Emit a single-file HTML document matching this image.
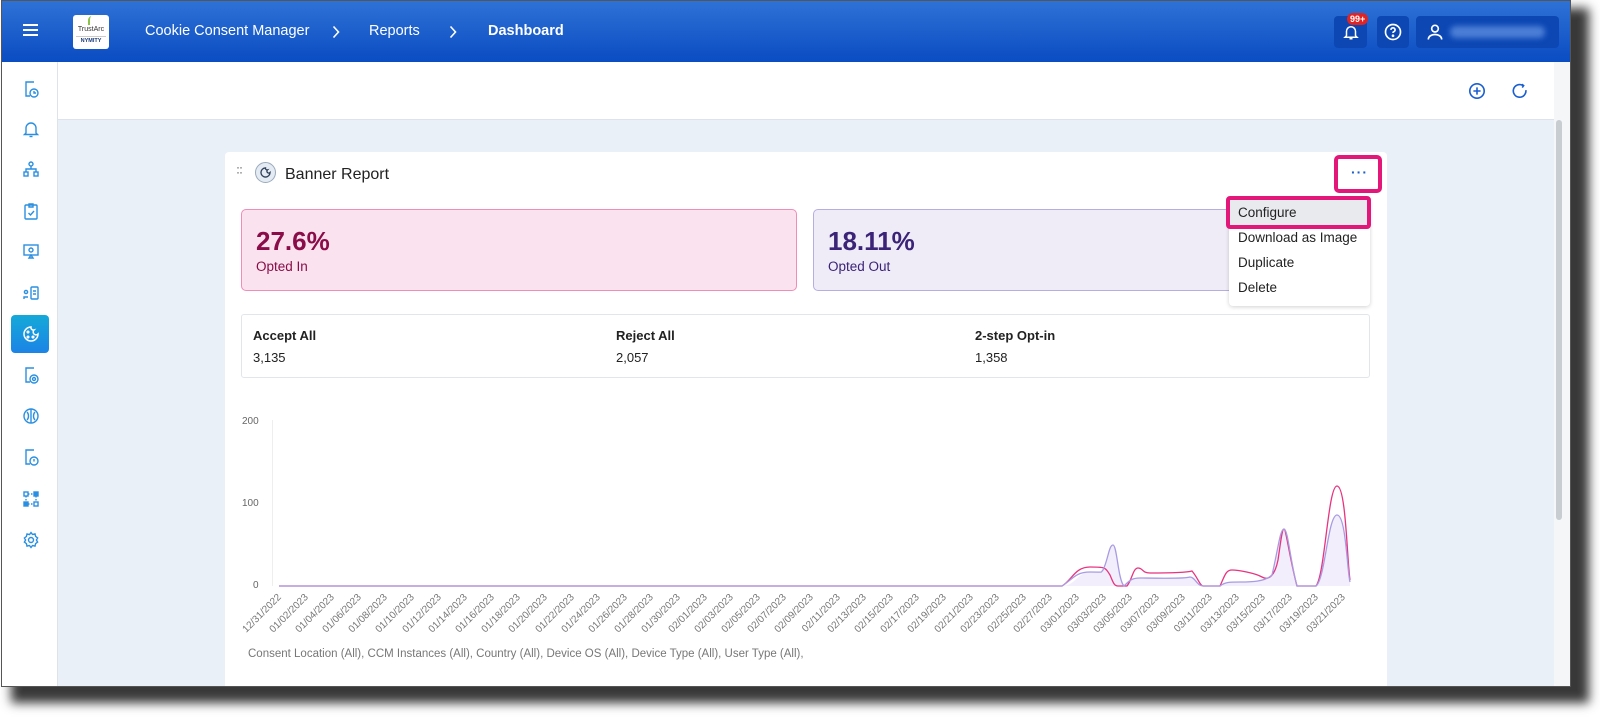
<!DOCTYPE html>
<html><head><meta charset="utf-8"><style>
*{box-sizing:border-box;margin:0;padding:0}
body{width:1600px;height:717px;background:#fff;position:relative;overflow:hidden;font-family:"Liberation Sans",sans-serif;color:#222}
.win{position:absolute;left:1px;top:0;width:1570px;height:687px;border:1px solid #555;background:#eaf0f8;box-shadow:14px 12px 10px 4px rgba(0,0,0,.78);overflow:hidden}
.hdr{position:absolute;left:0;top:0;width:1570px;height:61px;background:linear-gradient(#2f72d6,#0a4cc2)}
.a{position:absolute}
.bc{position:absolute;top:22px;color:#fff;font-size:14.5px}
.hb{position:absolute;top:15px;height:32px;background:#0c47b4;border-radius:4px}
.side{position:absolute;left:0;top:61px;width:56px;height:626px;background:#fff;border-right:1px solid #dde3ea}
.ic{position:absolute;left:19px;width:20px;height:20px}
.tool{position:absolute;left:56px;top:61px;width:1496px;height:58px;background:#fff;border-bottom:1px solid #dce3ec}
.card{position:absolute;left:223px;top:151px;width:1162px;height:560px;background:#fff;border-radius:4px}
.mi{position:absolute;left:1238px;font-size:13.5px;color:#222}
.xl{position:absolute;font-size:10px;color:#777;transform-origin:100% 0;transform:rotate(-45deg);white-space:nowrap;text-align:right}
</style></head><body>
<div class="win">
<div class="hdr">
 <div class="a" style="left:21px;top:23px;width:15px;height:2px;background:#fff;box-shadow:0 5px 0 #fff,0 10px 0 #fff"></div>
 <div class="a" style="left:71px;top:14px;width:36px;height:34px;background:#fff;border-radius:3px;text-align:center;font-size:7px;color:#333;line-height:8px;padding-top:11px">TrustArc<div style="border-top:1px solid #ccc;margin:2px 3px 0;font-size:5.5px;font-weight:bold;color:#1a3a7a">NYMITY</div></div>
 <div class="a" style="left:86px;top:15px;width:7px;height:9px;border-left:2px solid #8bc34a;border-radius:50% 0 0 0"></div>
 <div class="bc" style="left:143px">Cookie Consent Manager</div>
 <svg class="a" style="left:330px;top:24px" width="8" height="14" viewBox="0 0 8 14" fill="none" stroke="#fff" stroke-width="1.6"><path d="M1.5 1.5l5 5.5-5 5.5"/></svg>
 <div class="bc" style="left:367px">Reports</div>
 <svg class="a" style="left:447px;top:24px" width="8" height="14" viewBox="0 0 8 14" fill="none" stroke="#fff" stroke-width="1.6"><path d="M1.5 1.5l5 5.5-5 5.5"/></svg>
 <div class="bc" style="left:486px;font-weight:bold">Dashboard</div>
 <div class="hb" style="left:1332px;width:33px">
  <svg class="a" style="left:8px;top:7px" width="18" height="18" viewBox="0 0 24 24" fill="none" stroke="#fff" stroke-width="2"><path d="M6 17V11a6 6 0 0 1 12 0v6l2 2H4z"/><path d="M10 21h4"/></svg>
  <div class="a" style="left:13px;top:-3px;background:#e02424;color:#fff;font-size:9px;font-weight:bold;border-radius:7px;padding:1px 3px">99+</div></div>
 <div class="hb" style="left:1375px;width:32px"><svg class="a" style="left:6px;top:6px" width="20" height="20" viewBox="0 0 24 24" fill="none" stroke="#fff" stroke-width="2"><circle cx="12" cy="12" r="9"/><path d="M9.5 9.5a2.5 2.5 0 1 1 3 2.4c-.5.2-.5.6-.5 1.3"/><circle cx="12" cy="16.5" r=".6" fill="#fff"/></svg></div>
 <div class="hb" style="left:1414px;width:143px"><svg class="a" style="left:9px;top:6px" width="20" height="20" viewBox="0 0 24 24" fill="none" stroke="#fff" stroke-width="2"><circle cx="12" cy="8" r="4"/><path d="M4 21c0-4 4-6 8-6s8 2 8 6"/></svg>
 <div class="a" style="left:34px;top:10px;width:95px;height:12px;background:#4c7fd6;border-radius:6px;filter:blur(3px)"></div></div>
</div>
<div class="side">
 <svg class="ic" style="top:17px" viewBox="0 0 20 20" fill="none" stroke="#2a8fe0" stroke-width="1.4"><path d="M13 3H5v14h4"/><circle cx="13" cy="14" r="4"/><path d="M13 12v2h2"/></svg>
 <svg class="ic" style="top:57px" viewBox="0 0 20 20" fill="none" stroke="#2a8fe0" stroke-width="1.4"><path d="M5 14V9a5 5 0 0 1 10 0v5l1.5 1.5h-13z"/><path d="M8.5 17.5h3"/></svg>
 <svg class="ic" style="top:97px" viewBox="0 0 20 20" fill="none" stroke="#2a8fe0" stroke-width="1.4"><circle cx="10" cy="5" r="2"/><rect x="3" y="13" width="4" height="4"/><rect x="13" y="13" width="4" height="4"/><path d="M10 7v3M5 13v-3h10v3"/></svg>
 <svg class="ic" style="top:139px" viewBox="0 0 20 20" fill="none" stroke="#2a8fe0" stroke-width="1.4"><rect x="4" y="4" width="12" height="14" rx="1"/><path d="M8 3h4v3H8zM7.5 12l2 2 3.5-4"/></svg>
 <svg class="ic" style="top:179px" viewBox="0 0 20 20" fill="none" stroke="#2a8fe0" stroke-width="1.4"><rect x="3" y="4" width="14" height="10"/><circle cx="10" cy="9" r="2"/><path d="M8 17h4l-2-3z"/></svg>
 <svg class="ic" style="top:221px" viewBox="0 0 20 20" fill="none" stroke="#2a8fe0" stroke-width="1.4"><circle cx="5" cy="9" r="1.6"/><path d="M3 16v-2h4"/><rect x="10" y="4" width="7" height="12" rx="1"/><path d="M12 8h3M12 11h3"/></svg>
 <div class="a" style="left:9px;top:253px;width:38px;height:38px;border-radius:4px;background:linear-gradient(#14a9d8,#1c84e6)"></div>
 <svg class="ic" style="top:262px" viewBox="0 0 20 20" fill="none" stroke="#fff" stroke-width="1.5"><path d="M17 10a7 7 0 1 1-7-7 2.5 2.5 0 0 0 3 3 2.5 2.5 0 0 0 4 4z"/><circle cx="7" cy="8" r=".8" fill="#fff"/><circle cx="12" cy="13" r=".8" fill="#fff"/><circle cx="7" cy="13" r=".8" fill="#fff"/></svg>
 <svg class="ic" style="top:303px" viewBox="0 0 20 20" fill="none" stroke="#2a8fe0" stroke-width="1.4"><path d="M13 3H5v14h4"/><circle cx="13" cy="14" r="4"/><circle cx="13" cy="14" r="1.5"/></svg>
 <svg class="ic" style="top:344px" viewBox="0 0 20 20" fill="none" stroke="#2a8fe0" stroke-width="1.4"><circle cx="10" cy="10" r="7"/><path d="M10 3v14M6 6c2 2 2 6 0 8M14 6c-2 2-2 6 0 8"/></svg>
 <svg class="ic" style="top:385px" viewBox="0 0 20 20" fill="none" stroke="#2a8fe0" stroke-width="1.4"><path d="M13 3H5v14h4"/><circle cx="13" cy="14" r="4"/><path d="M13 12v2.5"/></svg>
 <svg class="ic" style="top:427px" viewBox="0 0 20 20" fill="none" stroke="#2a8fe0" stroke-width="1.4"><rect x="3" y="3" width="4" height="4"/><rect x="13" y="3" width="4" height="4" fill="#2a8fe0"/><rect x="3" y="13" width="4" height="4" fill="#2a8fe0"/><rect x="13" y="13" width="4" height="4"/><path d="M7 5h6M7 15h6M5 7v6M15 7v6" stroke-dasharray="1.5 1.5"/></svg>
 <svg class="ic" style="top:468px" viewBox="0 0 20 20" fill="none" stroke="#2a8fe0" stroke-width="1.4"><circle cx="10" cy="10" r="2.5"/><path d="M10 2.5l1.5 2 2.5-.6.6 2.5 2 1.5-1.2 2.1 1.2 2.1-2 1.5-.6 2.5-2.5-.6-1.5 2-1.5-2-2.5.6-.6-2.5-2-1.5 1.2-2.1L3.4 8l2-1.5.6-2.5 2.5.6z"/></svg>
</div>
<div class="tool">
 <svg class="a" style="left:1410px;top:20px" width="18" height="18" viewBox="0 0 20 20" fill="none" stroke="#1a5fd0" stroke-width="1.8"><circle cx="10" cy="10" r="8"/><path d="M10 6v8M6 10h8"/></svg>
 <svg class="a" style="left:1453px;top:20px" width="18" height="18" viewBox="0 0 20 20" fill="none" stroke="#1a5fd0" stroke-width="1.8"><path d="M16.5 9A7 7 0 1 1 13 3.8"/><path d="M12 2.5l2 1.5-1.5 2.2"/></svg>
</div>
<div class="a" style="left:1552px;top:61px;width:18px;height:626px;background:#f4f6f8"></div>
<div class="a" style="left:1554px;top:119px;width:6px;height:400px;background:#c8cdd2;border-radius:3px"></div>
<div class="card"></div>
</div>
<div class="a" style="left:236px;top:165px;color:#555;font-size:12px;letter-spacing:-1px;line-height:5px">··<br>··</div>
<div class="a" style="left:255px;top:162px;width:21px;height:21px;border-radius:50%;background:#e4ebf3;border:1px solid #9aa9bb"></div>
<svg class="a" style="left:259px;top:166px" width="13" height="13" viewBox="0 0 20 20" fill="none" stroke="#2b3c55" stroke-width="2"><path d="M17 10a7 7 0 1 1-7-7 2.5 2.5 0 0 0 3 3 2.5 2.5 0 0 0 4 4z"/></svg>
<div class="a" style="left:285px;top:166px;font-size:16px;color:#222">Banner Report</div>
<div class="a" style="left:1334px;top:155px;width:48px;height:38px;border:4px solid #e3177a;border-radius:5px"></div>
<div class="a" style="left:1351px;top:164px;color:#1a5fd0;font-size:14px;font-weight:bold;letter-spacing:1px">···</div>
<div class="a" style="left:241px;top:209px;width:556px;height:82px;background:#fae3ef;border:1px solid #f08cb8;border-radius:5px"></div>
<div class="a" style="left:256px;top:226px;font-size:26px;font-weight:bold;color:#8a0c48">27.6%</div>
<div class="a" style="left:256px;top:259px;font-size:13.5px;color:#8a0c48">Opted In</div>
<div class="a" style="left:813px;top:209px;width:550px;height:82px;background:#efecf8;border:1px solid #b6aee2;border-radius:5px"></div>
<div class="a" style="left:828px;top:226px;font-size:26px;font-weight:bold;color:#3b2478">18.11%</div>
<div class="a" style="left:828px;top:259px;font-size:13.5px;color:#3b2478">Opted Out</div>
<div class="a" style="left:1229px;top:199px;width:141px;height:107px;background:#fff;border-radius:4px;box-shadow:0 1px 4px rgba(0,0,0,.18)"></div>
<div class="a" style="left:1226px;top:196px;width:145px;height:33px;background:#e8eaee;border:4px solid #e3177a;border-radius:4px"></div>
<div class="mi" style="top:205px">Configure</div>
<div class="mi" style="top:230px">Download as Image</div>
<div class="mi" style="top:255px">Duplicate</div>
<div class="mi" style="top:280px">Delete</div>
<div class="a" style="left:241px;top:314px;width:1129px;height:64px;border:1px solid #e2e5ea;border-radius:3px"></div>
<div class="a" style="left:253px;top:328px;font-size:13px;font-weight:bold">Accept All</div>
<div class="a" style="left:253px;top:350px;font-size:13px">3,135</div>
<div class="a" style="left:616px;top:328px;font-size:13px;font-weight:bold">Reject All</div>
<div class="a" style="left:616px;top:350px;font-size:13px">2,057</div>
<div class="a" style="left:975px;top:328px;font-size:13px;font-weight:bold">2-step Opt-in</div>
<div class="a" style="left:975px;top:350px;font-size:13px">1,358</div>
<div class="a" style="left:242px;top:416px;font-size:10px;color:#666">200</div>
<div class="a" style="left:242px;top:498px;font-size:10px;color:#666">100</div>
<div class="a" style="left:253px;top:580px;font-size:10px;color:#666">0</div>
<svg class="a" style="left:0;top:0" width="1600" height="717">
<line x1="272.5" y1="420" x2="272.5" y2="586" stroke="#eee"/>
<path d="M279 586H1062C1075 586 1078 572 1090 572S1100 573 1103 570C1108 560 1109 545 1113 545S1118 580 1124 586C1130 580 1132 578 1140 578S1185 579 1190 577C1195 577 1197 586 1203 586H1220C1225 582 1230 582 1240 582S1265 582 1272 575C1278 550 1280 529 1284 529S1290 560 1297 586H1316C1325 580 1328 515 1337 515S1347 570 1350 582V586Z" fill="#f3eefb"/>
<path d="M279 586H1062C1072 580 1075 567 1090 567S1105 567 1110 575C1113 582 1114 586 1118 586H1127C1132 580 1133 568 1138 568S1142 573 1150 573S1185 573 1192 571C1198 578 1200 586 1203 586H1220C1225 575 1226 570 1232 570S1255 573 1262 577S1275 575 1278 560C1281 540 1282 529 1284 529S1290 560 1297 586H1316C1325 575 1328 486 1337 486S1347 560 1350 580" fill="none" stroke="#e8337f" stroke-width="1.3"/>
<path d="M279 586H1062C1072 580 1075 572 1090 572S1100 573 1103 570C1108 560 1109 545 1113 545S1118 580 1124 586C1130 580 1132 578 1140 578S1185 579 1190 577C1195 577 1197 586 1203 586H1220C1225 582 1230 582 1240 582S1265 582 1272 575C1278 550 1280 529 1284 529S1290 560 1297 586H1316C1325 580 1328 515 1337 515S1347 570 1350 582" fill="none" stroke="#a99be3" stroke-width="1.3"/>
</svg>
<div id="xl"></div>
<div class="a" style="left:248px;top:648px;font-size:11.5px;color:#777">Consent Location (All), CCM Instances (All), Country (All), Device OS (All), Device Type (All), User Type (All),</div>
<script>
var d=["12/31/2022"],m=[[1,2,30],[2,1,27],[3,1,21]];
m.forEach(function(a){for(var i=a[1];i<=a[2];i+=2)d.push("0"+a[0]+"/"+(i<10?"0":"")+i+"/2023")});
var h="";d.forEach(function(t,i){var x=280+i*26.6;h+='<div class="xl" style="left:'+(x-66)+'px;top:592px;width:62px">'+t+'</div>'});
document.getElementById("xl").innerHTML=h;
</script>
</body></html>
